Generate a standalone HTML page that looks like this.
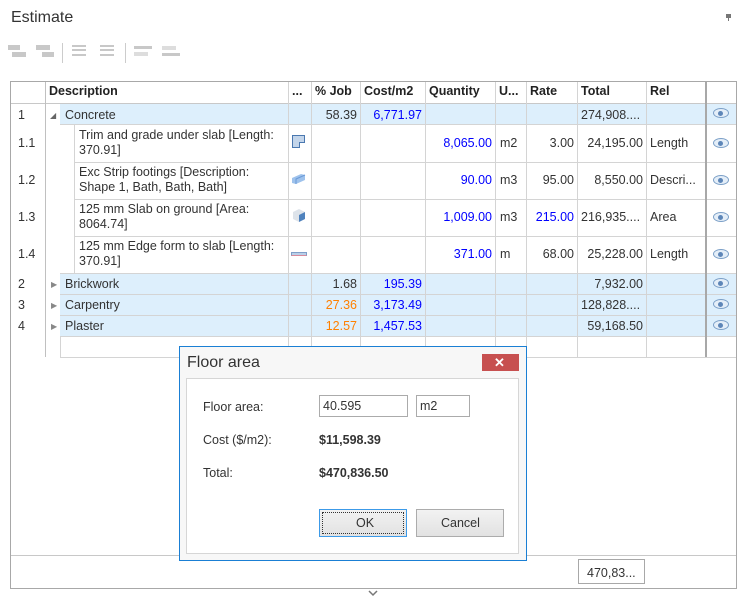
<!DOCTYPE html>
<html><head><meta charset="utf-8"><style>
*{margin:0;padding:0;box-sizing:border-box}
body{width:745px;height:601px;background:#fff;position:relative;overflow:hidden;font-family:"Liberation Sans",sans-serif;font-size:12.5px;color:#333}
.a{position:absolute}
.t{position:absolute;white-space:nowrap;line-height:15px}
.r{text-align:right}
.v{position:absolute;width:1px;background:#d4d4d4}
.h{position:absolute;height:1px;background:#d4d4d4}
.b{color:#0000ff}.o{color:#ff8000}
.hd{font-weight:bold;color:#222}
.eye{position:absolute;width:16px;height:10px;border:1.5px solid #7b9fc7;border-radius:50%;background:#e4eef8}
.eye:after{content:"";position:absolute;left:4px;top:1.5px;width:5px;height:5px;border-radius:50%;background:#5d86b8}
.tb{position:absolute;height:5px;background:#c8c8c8}
</style></head><body>
<div class="t" style="left:11px;top:9px;font-size:16px;line-height:18px;color:#333">Estimate</div>
<div class="a" style="left:726px;top:14px;width:5px;height:4px;background:#777"></div>
<div class="a" style="left:728px;top:17px;width:1px;height:4px;background:#777"></div>
<!-- toolbar -->
<div class="tb" style="left:8px;top:45px;width:12px"></div><div class="tb" style="left:12px;top:52px;width:14px"></div>
<div class="tb" style="left:36px;top:45px;width:14px"></div><div class="tb" style="left:42px;top:52px;width:12px"></div>
<div class="a" style="left:62px;top:43px;width:1px;height:20px;background:#ccc"></div>
<div class="tb" style="left:72px;top:45px;width:14px;height:2px"></div><div class="tb" style="left:72px;top:49px;width:14px;height:2px"></div><div class="tb" style="left:72px;top:54px;width:14px;height:2px"></div>
<div class="tb" style="left:100px;top:45px;width:14px;height:2px"></div><div class="tb" style="left:100px;top:49px;width:14px;height:2px"></div><div class="tb" style="left:100px;top:54px;width:14px;height:2px"></div>
<div class="a" style="left:125px;top:43px;width:1px;height:20px;background:#ccc"></div>
<div class="tb" style="left:134px;top:46px;width:18px;height:3px"></div><div class="tb" style="left:134px;top:52px;width:14px;height:4px;background:#ddd"></div>
<div class="tb" style="left:162px;top:46px;width:14px;height:4px;background:#ddd"></div><div class="tb" style="left:162px;top:53px;width:18px;height:3px"></div>

<!-- grid frame -->
<div class="a" style="left:10px;top:81px;width:727px;height:508px;border:1px solid #a8a8a8"></div>
<!-- row backgrounds -->
<div class="a" style="left:60px;top:104px;width:676px;height:20px;background:#ddeffc"></div>
<div class="a" style="left:60px;top:273px;width:676px;height:63px;background:#ddeffc"></div>
<!-- horizontal lines -->
<div class="h" style="left:11px;top:103px;width:725px;background:#c8c8c8"></div>
<div class="h" style="left:60px;top:124px;width:676px"></div>
<div class="h" style="left:74px;top:162px;width:662px"></div>
<div class="h" style="left:74px;top:199px;width:662px"></div>
<div class="h" style="left:74px;top:236px;width:662px"></div>
<div class="h" style="left:60px;top:273px;width:676px"></div>
<div class="h" style="left:60px;top:294px;width:676px"></div>
<div class="h" style="left:60px;top:315px;width:676px"></div>
<div class="h" style="left:60px;top:336px;width:676px"></div>
<div class="h" style="left:60px;top:357px;width:676px"></div>
<div class="h" style="left:11px;top:555px;width:725px;background:#c8c8c8"></div>
<!-- vertical lines -->
<div class="v" style="left:45px;top:82px;height:275px;background:#c0c0c0"></div>
<div class="v" style="left:60px;top:336px;height:21px"></div>
<div class="v" style="left:74px;top:124px;height:149px"></div>
<div class="v" style="left:288px;top:82px;height:275px"></div>
<div class="v" style="left:311px;top:82px;height:275px"></div>
<div class="v" style="left:360px;top:82px;height:275px"></div>
<div class="v" style="left:425px;top:82px;height:275px"></div>
<div class="v" style="left:495px;top:82px;height:275px"></div>
<div class="v" style="left:526px;top:82px;height:275px"></div>
<div class="v" style="left:577px;top:82px;height:275px"></div>
<div class="v" style="left:646px;top:82px;height:275px"></div>
<div class="v" style="left:705px;top:82px;height:275px;width:2px;background:#a8a8a8"></div>
<!-- header -->
<div class="t hd" style="left:49px;top:84px">Description</div>
<div class="t hd" style="left:292px;top:84px">...</div>
<div class="t hd" style="left:315px;top:84px">% Job</div>
<div class="t hd" style="left:364px;top:84px">Cost/m2</div>
<div class="t hd" style="left:429px;top:84px">Quantity</div>
<div class="t hd" style="left:499px;top:84px">U...</div>
<div class="t hd" style="left:530px;top:84px">Rate</div>
<div class="t hd" style="left:581px;top:84px">Total</div>
<div class="t hd" style="left:650px;top:84px">Rel</div>
<!-- row numbers -->
<div class="t" style="left:18px;top:108px">1</div>
<div class="t" style="left:18px;top:136px">1.1</div>
<div class="t" style="left:18px;top:173px">1.2</div>
<div class="t" style="left:18px;top:210px">1.3</div>
<div class="t" style="left:18px;top:247px">1.4</div>
<div class="t" style="left:18px;top:277px">2</div>
<div class="t" style="left:18px;top:298px">3</div>
<div class="t" style="left:18px;top:319px">4</div>
<!-- tree glyphs -->
<div class="t" style="left:50px;top:108px;font-size:8px;color:#666">◢</div>
<div class="t" style="left:51px;top:277px;font-size:8px;color:#888">▶</div>
<div class="t" style="left:51px;top:298px;font-size:8px;color:#888">▶</div>
<div class="t" style="left:51px;top:319px;font-size:8px;color:#888">▶</div>
<!-- row 1 -->
<div class="t" style="left:65px;top:108px">Concrete</div>
<div class="t r" style="left:311px;top:108px;width:46px">58.39</div>
<div class="t r b" style="left:360px;top:108px;width:62px">6,771.97</div>
<div class="t" style="left:581px;top:108px">274,908....</div>
<!-- 1.1 -->
<div class="t" style="left:79px;top:128px">Trim and grade under slab [Length:<br>370.91]</div>
<div class="t r b" style="left:425px;top:136px;width:67px">8,065.00</div>
<div class="t" style="left:500px;top:136px">m2</div>
<div class="t r" style="left:526px;top:136px;width:48px">3.00</div>
<div class="t r" style="left:577px;top:136px;width:66px">24,195.00</div>
<div class="t" style="left:650px;top:136px">Length</div>
<!-- 1.2 -->
<div class="t" style="left:79px;top:165px">Exc Strip footings [Description:<br>Shape 1, Bath, Bath, Bath]</div>
<div class="t r b" style="left:425px;top:173px;width:67px">90.00</div>
<div class="t" style="left:500px;top:173px">m3</div>
<div class="t r" style="left:526px;top:173px;width:48px">95.00</div>
<div class="t r" style="left:577px;top:173px;width:66px">8,550.00</div>
<div class="t" style="left:650px;top:173px">Descri...</div>
<!-- 1.3 -->
<div class="t" style="left:79px;top:202px">125 mm Slab on ground [Area:<br>8064.74]</div>
<div class="t r b" style="left:425px;top:210px;width:67px">1,009.00</div>
<div class="t" style="left:500px;top:210px">m3</div>
<div class="t r b" style="left:526px;top:210px;width:48px">215.00</div>
<div class="t" style="left:581px;top:210px">216,935....</div>
<div class="t" style="left:650px;top:210px">Area</div>
<!-- 1.4 -->
<div class="t" style="left:79px;top:239px">125 mm Edge form to slab [Length:<br>370.91]</div>
<div class="t r b" style="left:425px;top:247px;width:67px">371.00</div>
<div class="t" style="left:500px;top:247px">m</div>
<div class="t r" style="left:526px;top:247px;width:48px">68.00</div>
<div class="t r" style="left:577px;top:247px;width:66px">25,228.00</div>
<div class="t" style="left:650px;top:247px">Length</div>
<!-- group rows -->
<div class="t" style="left:65px;top:277px">Brickwork</div>
<div class="t r" style="left:311px;top:277px;width:46px">1.68</div>
<div class="t r b" style="left:360px;top:277px;width:62px">195.39</div>
<div class="t r" style="left:577px;top:277px;width:66px">7,932.00</div>
<div class="t" style="left:65px;top:298px">Carpentry</div>
<div class="t r o" style="left:311px;top:298px;width:46px">27.36</div>
<div class="t r b" style="left:360px;top:298px;width:62px">3,173.49</div>
<div class="t" style="left:581px;top:298px">128,828....</div>
<div class="t" style="left:65px;top:319px">Plaster</div>
<div class="t r o" style="left:311px;top:319px;width:46px">12.57</div>
<div class="t r b" style="left:360px;top:319px;width:62px">1,457.53</div>
<div class="t r" style="left:577px;top:319px;width:66px">59,168.50</div>
<!-- shape icons -->
<svg class="a" style="left:291px;top:134px" width="16" height="16"><path d="M1.5 1.5H13.5V8.5H8.5V13.5H1.5Z" fill="#c3d5ea" stroke="#4a78b0"/></svg>
<svg class="a" style="left:291px;top:172px" width="16" height="14"><path d="M1 6L10 2L14 3V8L5 12L1 11Z" fill="#9ec2ec"/><path d="M5 12V7L14 3" stroke="#6a9ad8" fill="none"/></svg>
<svg class="a" style="left:292px;top:208px" width="14" height="16"><path d="M1 4L7 1L13 4V11L7 14L1 11Z" fill="#dde3ea"/><path d="M7 7L13 4V11L7 14Z" fill="#4f82bd"/></svg>
<div class="a" style="left:291px;top:252px;width:16px;height:4px;background:#b9cfe8;border:1px solid #7f9fc8;border-bottom:1px solid #d88a9a"></div>
<!-- eyes -->
<div class="eye" style="left:713px;top:108px"></div>
<div class="eye" style="left:713px;top:138px"></div>
<div class="eye" style="left:713px;top:175px"></div>
<div class="eye" style="left:713px;top:212px"></div>
<div class="eye" style="left:713px;top:249px"></div>
<div class="eye" style="left:713px;top:278px"></div>
<div class="eye" style="left:713px;top:299px"></div>
<div class="eye" style="left:713px;top:320px"></div>
<!-- footer -->
<div class="a" style="left:578px;top:559px;width:67px;height:25px;border:1px solid #a8a8a8"></div>
<div class="t" style="left:587px;top:566px">470,83...</div>
<svg class="a" style="left:368px;top:590px" width="10" height="7"><path d="M1 1L5 5L9 1" stroke="#777" stroke-width="1.5" fill="none"/></svg>
<!-- dialog -->
<div class="a" style="left:179px;top:346px;width:348px;height:215px;background:#f7f7f7;border:1px solid #1a7fd4"></div>
<div class="t" style="left:187px;top:354px;font-size:16px;line-height:18px">Floor area</div>
<div class="a" style="left:482px;top:354px;width:37px;height:17px;background:#c75050"></div>
<div class="t" style="left:494px;top:355px;color:#fff;font-size:13px;font-weight:bold">✕</div>
<div class="a" style="left:186px;top:378px;width:333px;height:176px;background:#fff;border:1px solid #d6d6d6"></div>
<div class="t" style="left:203px;top:400px">Floor area:</div>
<div class="a" style="left:319px;top:395px;width:89px;height:22px;border:1px solid #ababab;background:#fff"></div>
<div class="t" style="left:323px;top:399px">40.595</div>
<div class="a" style="left:416px;top:395px;width:54px;height:22px;border:1px solid #ababab;background:#fff"></div>
<div class="t" style="left:420px;top:399px">m2</div>
<div class="t" style="left:203px;top:433px">Cost ($/m2):</div>
<div class="t" style="left:319px;top:433px;font-weight:bold">$11,598.39</div>
<div class="t" style="left:203px;top:466px">Total:</div>
<div class="t" style="left:319px;top:466px;font-weight:bold">$470,836.50</div>
<div class="a" style="left:319px;top:509px;width:88px;height:28px;border:1px solid #3c9ae8;background:linear-gradient(#f2f2f2,#e2e2e2)"><div style="position:absolute;left:2px;top:2px;right:2px;bottom:2px;border:1px dotted #333"></div></div>
<div class="t" style="left:356px;top:516px">OK</div>
<div class="a" style="left:416px;top:509px;width:88px;height:28px;border:1px solid #acacac;background:linear-gradient(#f2f2f2,#e2e2e2)"></div>
<div class="t" style="left:441px;top:516px">Cancel</div>
</body></html>
